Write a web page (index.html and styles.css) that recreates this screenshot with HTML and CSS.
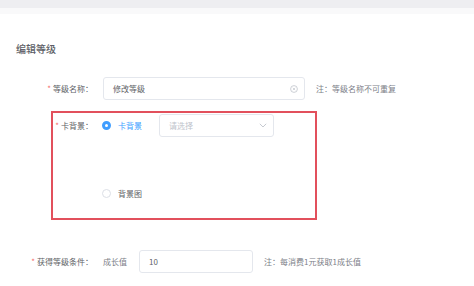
FILE: index.html
```html
<!DOCTYPE html>
<html lang="zh-CN">
<head>
  <meta charset="UTF-8" />
  <title>编辑等级</title>
  <link rel="stylesheet" href="styles.css">
</head>
<body>

  <div class="topbar"></div>

  <div class="page">
    <h2 class="title">编辑等级</h2>

    <!-- 等级名称 -->
    <div class="row row-name">
      <label class="label"><span class="star">*</span>等级名称：</label>
      <div class="input input-name">
        <span>修改等级</span>
        <svg class="clear" width="8" height="8" viewBox="0 0 8 8">
          <circle cx="4" cy="4" r="3.4" fill="none" stroke="#c0c4cc" stroke-width="0.8"/>
          <path d="M2.8 2.8 L5.2 5.2 M5.2 2.8 L2.8 5.2" stroke="#c0c4cc" stroke-width="0.7"/>
        </svg>
      </div>
      <span class="note">注：等级名称不可重复</span>
    </div>

    <!-- 卡背景 -->
    <div class="card-box">
      <label class="label label-bg"><span class="star">*</span>卡背景：</label>
      <div class="radios">
        <div class="radio-line">
          <span class="radio checked"></span>
          <span class="radio-text active">卡背景</span>
          <div class="select">
            <span class="placeholder">请选择</span>
            <svg width="8" height="5" viewBox="0 0 8 5">
              <path d="M0.8 0.8 L4 4 L7.2 0.8" fill="none" stroke="#c0c4cc" stroke-width="0.9"/>
            </svg>
          </div>
        </div>
        <div class="radio-line second">
          <span class="radio"></span>
          <span class="radio-text">背景图</span>
        </div>
      </div>
    </div>

    <!-- 获得等级条件 -->
    <div class="row row-cond">
      <label class="label"><span class="star">*</span>获得等级条件：</label>
      <span class="unit">成长值</span>
      <div class="input input-num"><span>10</span></div>
      <span class="note">注：每消费1元获取1成长值</span>
    </div>
  </div>

</body>
</html>
```

FILE: styles.css
```css
body {
  margin: 0;
  background: #fff;
  font-family: "Noto Sans CJK SC", "Noto Sans", sans-serif;
  color: #606266;
  font-size: 8px;
}

.topbar {
  height: 8px;
  background: #eeeef1;
  border-bottom: 6px solid #f9f9fa;
}

.page {
  padding-top: 27px;
}

.title {
  margin: 0 0 0 16px;
  font-size: 10px;
  line-height: 16px;
  font-weight: 500;
  color: #5c5e66;
}

.row {
  display: flex;
  align-items: center;
}

.row-name {
  margin-top: 20px;
}

.row-cond {
  margin-top: 30px;
}

.label {
  width: 93px;
  padding-right: 10px;
  text-align: right;
  flex-shrink: 0;
  white-space: nowrap;
}

.star {
  color: #f56c6c;
  margin-right: 2px;
}

.input {
  height: 23px;
  box-sizing: border-box;
  border: 1px solid #e4e7ed;
  border-radius: 3px;
  display: flex;
  align-items: center;
  justify-content: space-between;
  padding: 0 6px 0 9px;
}

.input-name {
  width: 202px;
}

.input-num {
  width: 114px;
  margin-left: 12px;
}

.note {
  margin-left: 11px;
  color: #7d8088;
}

.unit {
  color: #7d8088;
}

.card-box {
  margin: 11px 0 0 51px;
  width: 266px;
  height: 109px;
  box-sizing: border-box;
  border: 2px solid #e2505c;
  display: flex;
  align-items: flex-start;
  padding-top: 1px;
}

.label-bg {
  width: 40px;
  line-height: 23px;
}

.radios {
  flex: 1;
}

.radio-line {
  display: flex;
  align-items: center;
  height: 23px;
}

.radio-line.second {
  margin-top: 45px;
}

.radio {
  width: 9px;
  height: 9px;
  box-sizing: border-box;
  border-radius: 50%;
  border: 1px solid #dcdfe6;
  margin-left: -1px;
  margin-right: 7px;
}

.radio.checked {
  border: 3px solid #409eff;
  background: #fff;
}

.radio-text {
  color: #606266;
}

.radio-text.active {
  color: #409eff;
}

.select {
  margin-left: 17px;
  width: 115px;
  height: 23px;
  box-sizing: border-box;
  border: 1px solid #e4e7ed;
  border-radius: 3px;
  display: flex;
  align-items: center;
  justify-content: space-between;
  padding: 0 6px 0 9px;
}

.placeholder {
  color: #c0c4cc;
}
```
